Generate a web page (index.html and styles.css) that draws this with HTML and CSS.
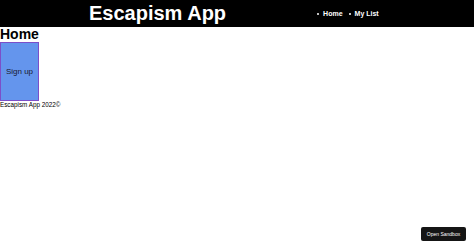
FILE: index.html
```html
<!DOCTYPE html>
<html lang="en">
<head>
    <meta charset="UTF-8">
    <meta name="viewport" content="width=device-width, initial-scale=1.0">
    <title>Escapism App</title>
    <link rel="stylesheet" href="styles.css">
</head>
<body>
    <header class="top-bar">
        <h1 class="app-title">Escapism App</h1>
        <ul class="nav-list">
            <li>Home</li>
            <li>My List</li>
        </ul>
    </header>

    <main>
        <h2 class="page-title">Home</h2>
        <button type="button" class="signup-btn">Sign up</button>
    </main>

    <footer class="footer">Escapism App 2022&copy;</footer>

    <button type="button" class="sandbox-btn">Open Sandbox</button>
</body>
</html>
```

FILE: styles.css
```css
body {
    font-family: "Liberation Sans", Arial, sans-serif;
    margin: 0;
    padding: 0;
    background-color: #fff;
    color: #000;
}
.top-bar {
    display: flex;
    align-items: center;
    height: 27px;
    background-color: #000;
    color: #fff;
    padding-left: 89px;
}
.app-title {
    margin: 0;
    font-size: 20px;
    line-height: 27px;
    font-weight: bold;
}
.nav-list {
    display: flex;
    gap: 6px;
    margin: 0 0 0 91px;
    padding: 0;
    list-style: none;
    font-size: 7px;
    font-weight: bold;
}
.nav-list li {
    display: flex;
    align-items: center;
    gap: 4px;
}
.nav-list li::before {
    content: "";
    width: 2px;
    height: 2px;
    border-radius: 50%;
    background-color: #fff;
}
.page-title {
    margin: 0;
    font-size: 14px;
    line-height: 15px;
    font-weight: bold;
}
.signup-btn {
    display: block;
    width: 39px;
    height: 59px;
    margin: 0;
    padding: 0;
    background-color: #6495ed;
    border: 1px solid #7b4fc9;
    color: #1a1a2e;
    font-family: "Liberation Sans", Arial, sans-serif;
    font-size: 8px;
}
.footer {
    font-size: 6.3px;
    line-height: 8px;
}
.sandbox-btn {
    position: fixed;
    right: 8px;
    bottom: 7px;
    width: 45px;
    height: 14px;
    padding: 0;
    background-color: #151515;
    color: #fff;
    border: none;
    border-radius: 2px;
    font-family: "Liberation Sans", Arial, sans-serif;
    font-size: 5px;
}
```
